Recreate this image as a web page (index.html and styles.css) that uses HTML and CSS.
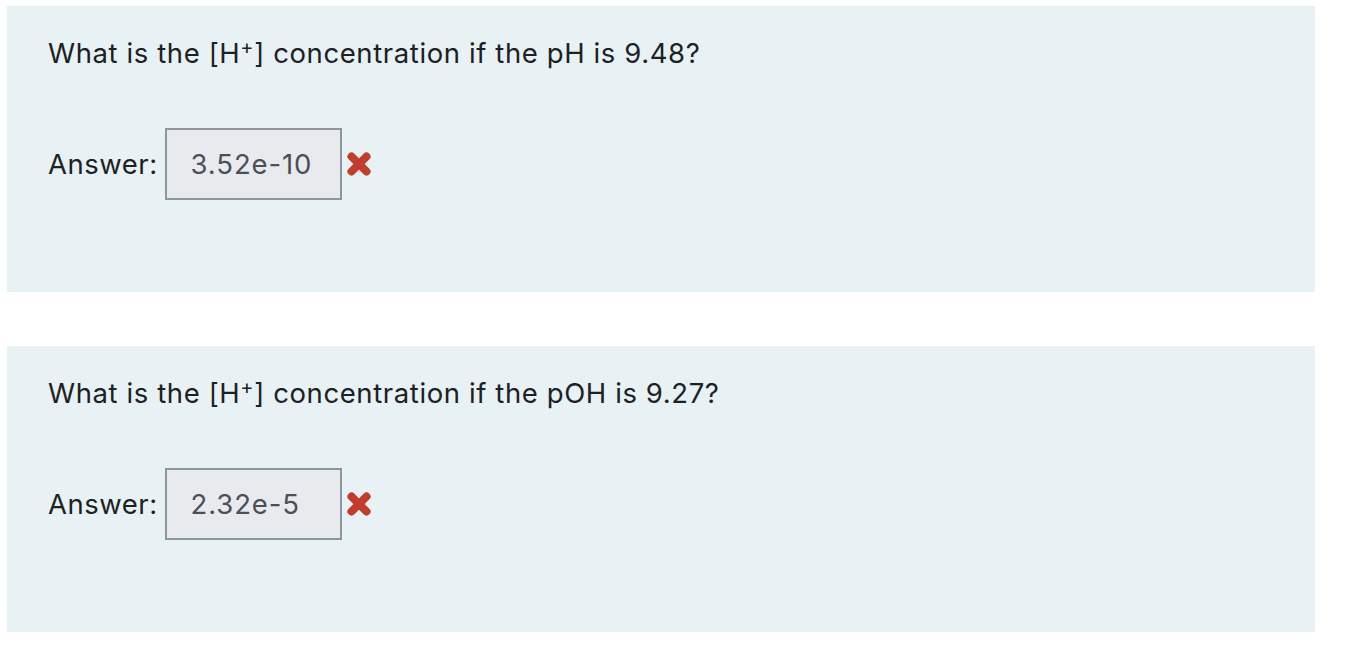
FILE: index.html
```html
<!DOCTYPE html>
<html lang="en">
  <head>
    <meta charset="UTF-8" />
    <meta name="viewport" content="width=device-width, initial-scale=1.0" />
    <title>Quiz review</title>
    <link rel="stylesheet" href="styles.css">
  </head>
  <body>
    <div class="questions">
      <div class="que">
        <p class="qtext">What is the [H<sup>+</sup>] concentration if the pH is 9.48?</p>
        <div class="ablock">
          <label for="q1">Answer:</label>
          <input type="text" id="q1" class="answer" value="3.52e-10" readonly />
          <svg class="icon-wrong" viewBox="0 0 24 24" aria-label="Incorrect">
            <path d="M6 6 L18 18 M18 6 L6 18" />
          </svg>
        </div>
      </div>

      <div class="que">
        <p class="qtext">What is the [H<sup>+</sup>] concentration if the pOH is 9.27?</p>
        <div class="ablock">
          <label for="q2">Answer:</label>
          <input type="text" id="q2" class="answer" value="2.32e-5" readonly />
          <svg class="icon-wrong" viewBox="0 0 24 24" aria-label="Incorrect">
            <path d="M6 6 L18 18 M18 6 L6 18" />
          </svg>
        </div>
      </div>
    </div>
  </body>
</html>
```

FILE: styles.css
```css
* {
  margin: 0;
  padding: 0;
  box-sizing: border-box;
}

body {
  font-family: Inter, "Noto Sans", sans-serif;
  background: #fff;
  color: #1d2125;
  letter-spacing: 0.5px;
}

.questions {
  width: 1308px;
  margin: 6px 0 0 7px;
  display: flex;
  flex-direction: column;
  gap: 54px;
}

.que {
  background: #e8f1f4;
  height: 286px;
  padding: 27px 41px 0;
}

.qtext {
  font-size: 27.5px;
  line-height: 40px;
  letter-spacing: 0.6px;
  margin-bottom: 54px;
}

.qtext sup {
  font-size: 20px;
  line-height: 0;
  vertical-align: 9px;
}

.ablock {
  display: flex;
  align-items: center;
  font-size: 27.5px;
  padding-top: 1px;
}

.ablock label {
  margin-right: 7px;
}

.answer {
  width: 177px;
  height: 72px;
  border: 2px solid #8f959e;
  background: #e9eaee;
  color: #495057;
  font: inherit;
  letter-spacing: 0.9px;
  padding: 0 24px;
  outline: none;
}

.icon-wrong {
  width: 30px;
  height: 30px;
  margin-left: 2px;
}

.icon-wrong path {
  stroke: #c43c2c;
  stroke-width: 6.5;
  stroke-linecap: round;
  fill: none;
}
```
